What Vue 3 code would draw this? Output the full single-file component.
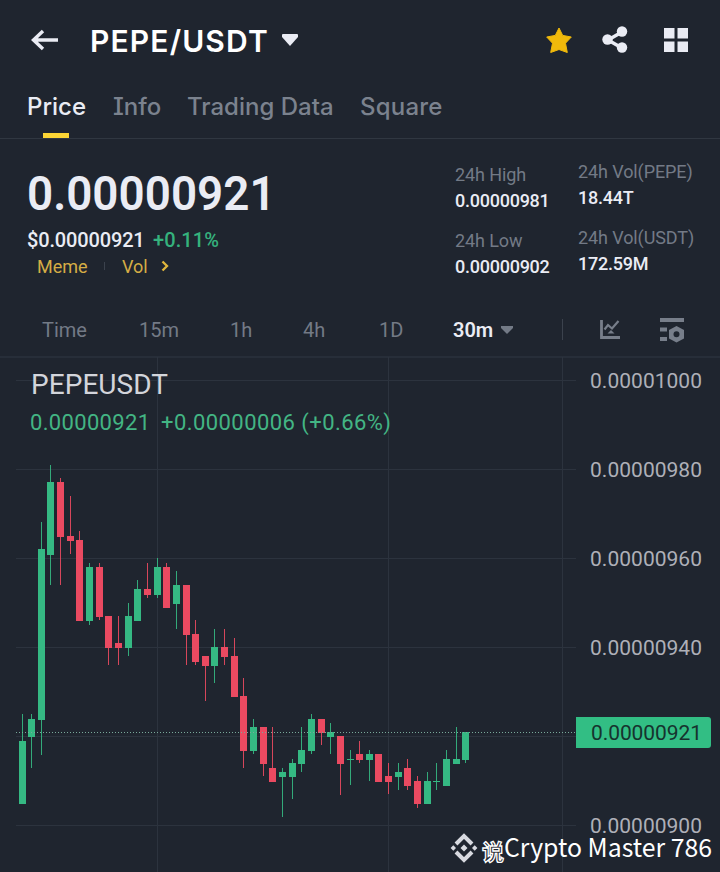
<script setup>
const candles = [
  [22, 714, 741, 804, 804, 1], [31, 714, 719, 737, 768, 1], [41, 522, 549, 720, 755, 1],
  [50, 465, 482, 555, 585, 1], [60, 478, 482, 537, 585, 0], [70, 496, 536, 541, 554, 0],
  [79, 531, 540, 621, 621, 0], [89, 563, 567, 621, 625, 1], [99, 563, 567, 617, 620, 0],
  [108, 616, 616, 648, 665, 0], [118, 616, 643, 648, 665, 0], [128, 603, 616, 648, 656, 1],
  [137, 580, 589, 621, 621, 1], [147, 563, 589, 595, 598, 0], [157, 558, 567, 595, 598, 1],
  [166, 563, 567, 608, 608, 0], [176, 571, 585, 604, 629, 1], [186, 585, 585, 635, 665, 0],
  [195, 620, 634, 662, 665, 0], [205, 656, 656, 666, 701, 0], [214, 629, 647, 666, 683, 1],
  [224, 629, 647, 657, 665, 0], [234, 638, 656, 697, 697, 0], [243, 678, 696, 751, 768, 0],
  [253, 719, 727, 751, 754, 1], [263, 727, 727, 764, 776, 0], [272, 727, 768, 782, 782, 0],
  [282, 768, 772, 777, 817, 1], [292, 759, 763, 777, 799, 1], [301, 727, 750, 764, 772, 1],
  [311, 714, 719, 751, 754, 1], [321, 719, 719, 733, 745, 0], [330, 723, 732, 737, 754, 1],
  [340, 736, 736, 764, 795, 0], [350, 750, 759, 760, 785, 1], [359, 741, 754, 760, 763, 0],
  [369, 750, 754, 760, 781, 1], [378, 754, 754, 782, 782, 0], [388, 763, 776, 782, 794, 0],
  [398, 763, 772, 777, 790, 1], [407, 759, 768, 786, 790, 0], [417, 776, 781, 804, 808, 0],
  [427, 772, 781, 804, 804, 1], [436, 763, 781, 782, 790, 1], [446, 750, 759, 786, 786, 1],
  [456, 727, 759, 764, 764, 1], [465, 732, 732, 760, 763, 1],
].map(([x, high, top, bottom, low, up]) => ({ x, high, top, bottom, low, up }))

const gridRows = [380, 469, 558, 647, 736, 825]
const gridCols = [157, 388, 562]
const axis = [
  ['0.00001000', 380], ['0.00000980', 469], ['0.00000960', 558], ['0.00000940', 647], ['0.00000900', 825],
]
</script>

<template>
  <main class="screen">
    <header class="topbar">
      <svg class="back" width="28" height="22" viewBox="0 0 28 22"><path d="M13 2L3.500 11l9.500 9M4 11H28" /></svg>
      <h1>PEPE/USDT</h1>
      <svg class="caret" width="18" height="14" viewBox="0 0 18 14"><path d="M1 2Q1 1 2 1H16Q17 1 17 2V4L9 13L1 4Z" /></svg>
      <svg class="star" width="28" height="28" viewBox="0 0 28 28"><path d="M14 2l3.700 7.400 8.600 1.600-5.800 6.200 1.800 9.300L14 23.500l-8.300 3 1.800-9.300-5.800-6.200 8.600-1.600z" /></svg>
      <svg class="share" width="28" height="28" viewBox="0 0 28 28"><path d="M21 6L7 14l14 8" /><circle cx="21" cy="5.500" r="5.200" /><circle cx="6.500" cy="13.500" r="5.200" /><circle cx="21" cy="21.500" r="5.200" /></svg>
      <svg class="grid" width="26" height="26" viewBox="0 0 26 26"><path d="M1 1h10.500v10.500H1zM14.500 1H25v10.500H14.500zM1 14.500h10.500V25H1zM14.500 14.500H25V25H14.500z" /></svg>
    </header>

    <nav class="tabs">
      <span class="tab active">Price</span>
      <span class="tab info">Info</span>
      <span class="tab trading">Trading Data</span>
      <span class="tab square">Square</span>
    </nav>

    <section class="summary">
      <div class="quote">
        <div class="last">0.00000921</div>
        <div class="fiat"><span class="usd">$0.00000921</span><span class="change">+0.11%</span></div>
        <div class="tags">
          <span class="meme">Meme</span><i></i><span class="vol">Vol</span>
          <svg width="8" height="12" viewBox="0 0 8 12"><path d="M1.500 1.500L6 6l-4.500 4.500" /></svg>
        </div>
      </div>
      <dl class="stats left">
        <dt>24h High</dt><dd>0.00000981</dd>
        <dt>24h Low</dt><dd>0.00000902</dd>
      </dl>
      <dl class="stats right">
        <dt>24h Vol(PEPE)</dt><dd>18.44T</dd>
        <dt>24h Vol(USDT)</dt><dd>172.59M</dd>
      </dl>
    </section>

    <section class="intervals">
      <span class="time">Time</span>
      <span class="m15">15m</span>
      <span class="h1">1h</span>
      <span class="h4">4h</span>
      <span class="d1">1D</span>
      <b>30m</b>
      <svg class="drop" width="12" height="10" viewBox="0 0 12 10"><path d="M0 1H12V3L6 9L0 3Z" /></svg>
      <i></i>
      <svg class="indicator" width="20" height="21" viewBox="0 0 20 21"><path d="M1.500 1V18.500H20" /><path class="line" d="M4.500 10.500L8 6l4 3.500 6.500-7.500" /><path class="thin" d="M7.500 14.500l3.500-3.500 3.500 3.500z" /></svg>
      <svg class="settings" width="26" height="26" viewBox="0 0 26 26"><path class="solid" d="M1 1h24v4H1zM1 10.500h7v4H1zM1 20h7v4H1z" /><path class="solid" fill-rule="evenodd" d="M17.500 9l7.500 4v8.500l-7.500 4-7.500-4v-8.500zM17.500 14.200a3 3 0 1 0 0 6a3 3 0 1 0 0-6z" /></svg>
    </section>

    <section class="chart">
      <svg class="plot" width="720" height="516" viewBox="0 356 720 516">
        <g class="gridlines">
          <path v-for="y in gridRows" :key="'r' + y" :d="`M16 ${y + 0.5}H576`" />
          <path v-for="x in gridCols" :key="'c' + x" :d="`M${x + 0.5} 357V872`" />
        </g>
        <g v-for="c in candles" :key="c.x" :class="c.up ? 'up' : 'down'">
          <rect class="wick" :x="c.x" :y="c.high" width="1" :height="c.low - c.high" />
          <rect :x="c.x - 3" :y="c.top" width="7" :height="c.bottom - c.top" />
        </g>
        <path class="current" d="M16 732.500H576" />
        <path class="badge" d="M576 717H708Q711 717 711 720V745Q711 748 708 748H576Z" />
        <text v-for="[label, y] in axis" :key="label" class="axis" x="590" :y="y + 8" textLength="112">{{ label }}</text>
        <text class="axis now" x="591" y="740" textLength="111">0.00000921</text>
        <text class="symbol" x="31" y="394" textLength="137">PEPEUSDT</text>
        <text class="delta" x="30" y="430" textLength="120">0.00000921</text>
        <text class="delta" x="161" y="430" textLength="230">+0.00000006 (+0.66%)</text>
        <g class="mark" transform="translate(464 848)">
          <path d="M-8-4L0-12 8-4" /><path d="M-8 4L0 12 8 4" />
          <path class="fill" d="M0-3.500L3.500 0 0 3.500-3.500 0zM-10.700-2.700L-8 0-10.700 2.700-13.400 0zM10.700-2.700L13.400 0 10.700 2.700 8 0z" />
        </g>
        <text class="glyph" x="482" y="860">说</text>
        <text class="author" x="504" y="857" textLength="208" lengthAdjust="spacingAndGlyphs">Crypto Master 786</text>
      </svg>
    </section>
  </main>
</template>

<style>
body { background: #1f252f; }
</style>

<style scoped>
.screen { width: 720px; height: 872px; overflow: hidden; background: #1f252f; color: #eaecf4; font-family: Roboto, sans-serif; display: flex; flex-direction: column; }
svg { display: block; flex: none; }
span, b, h1, dt, dd, .last { white-space: nowrap; }

.topbar { height: 80px; display: flex; align-items: center; padding-left: 30px; flex: none; box-sizing: border-box; }
.back { fill: none; stroke: #eaecf4; stroke-width: 3.4; }
h1 { margin: 2px 0 0 32px; width: 177px; font: 600 30px/40px Inter, sans-serif; color: #fff; letter-spacing: 1.15px; }
.caret { margin-left: 14px; fill: #eaecf4; }
.star { margin-left: 246px; fill: #f0b90b; stroke: #f0b90b; stroke-width: 1; stroke-linejoin: round; }
.share { margin-left: 28px; fill: #eaecf4; }
.share path { fill: none; stroke: #eaecf4; stroke-width: 3.5; }
.grid { margin-left: 34px; fill: #eaecf4; }

.tabs { height: 59px; box-sizing: border-box; border-bottom: 1px solid #303741; display: flex; padding-left: 27px; flex: none; font: 500 24px/54px Inter, sans-serif; font-feature-settings: "cv08"; color: #7b828e; }
.tab { height: 58px; }
.active { width: 86px; color: #eaecf4; display: flex; flex-direction: column; align-items: flex-start; }
.active::after { content: ""; width: 26px; height: 5px; margin-left: 16px; margin-top: -1px; background: #fcd535; }
.info { width: 74px; }
.trading { width: 173px; }
.square { letter-spacing: 0.2px; }

.summary { height: 161px; display: flex; flex: none; }
.quote { width: 428px; padding-left: 27px; }
.last { margin-top: 27px; font-size: 49px; line-height: 56px; font-weight: 600; transform: scaleX(0.935); transform-origin: left; }
.fiat { display: flex; margin-top: 5px; font-size: 20px; line-height: 26px; font-weight: 500; letter-spacing: -0.15px; }
.usd { width: 126px; }
.change { color: #35b27d; letter-spacing: 0.1px; }
.tags { display: flex; align-items: center; height: 26px; padding-left: 10px; font-size: 18px; color: #d5ad45; }
.meme { width: 67px; }
.tags i { width: 1px; height: 8px; background: #3b424d; }
.vol { width: 39px; margin-left: 17px; }
.tags svg { fill: none; stroke: #e0b63c; stroke-width: 2.3; }
.stats { margin: 0; font-size: 18px; line-height: 26px; }
.stats.left { width: 123px; padding-top: 23px; }
.stats.right { padding-top: 20px; }
dt { color: #737a86; letter-spacing: -0.1px; }
dd { margin: 0 0 14px; color: #eaecf4; font-weight: 500; letter-spacing: -0.25px; }

.intervals { height: 56px; box-sizing: border-box; padding: 3px 0 0 42px; display: flex; align-items: center; flex: none; font-size: 20px; color: #737a86; }
.time { width: 97px; }
.m15 { width: 91px; }
.h1 { width: 73px; }
.h4 { width: 76px; }
.d1 { width: 74px; }
b { width: 48px; color: #eaecf4; font-weight: 600; }
.drop { fill: #737a86; }
.intervals i { width: 1px; height: 21px; margin-left: 49px; background: #3b424d; }
.indicator { margin-left: 37px; fill: none; stroke: #777e8a; stroke-width: 2.8; }
.indicator .line { stroke-width: 2.2; }
.indicator .thin { fill: #777e8a; stroke: none; }
.settings { margin-left: 39px; }
.solid { fill: #777e8a; }

.chart { height: 516px; box-shadow: inset 0 2px #272e39; }
.gridlines path { stroke: #2c333e; }
.up { fill: #35b983; }
.down { fill: #ea4a61; }
.wick { opacity: 0.9; }
.current { stroke: #79a99a; stroke-dasharray: 1 2; }
.badge { fill: #32be84; }
text { font-family: Roboto, sans-serif; }
.axis { font-size: 21px; fill: #aeb0b8; }
.now { fill: #16332e; }
.symbol { font-size: 28px; fill: #d3d5db; }
.delta { font-size: 22px; fill: #43b584; }
.mark path { fill: none; stroke: #d8dae0; stroke-width: 4; }
.mark .fill { fill: #d8dae0; stroke: none; }
.glyph { font: 700 22px "Noto Sans CJK SC", sans-serif; fill: #1f252f; stroke: #fff; stroke-width: 1.3; }
.author { font: 400 25.5px "Noto Sans CJK SC", sans-serif; fill: #fff; }
</style>
